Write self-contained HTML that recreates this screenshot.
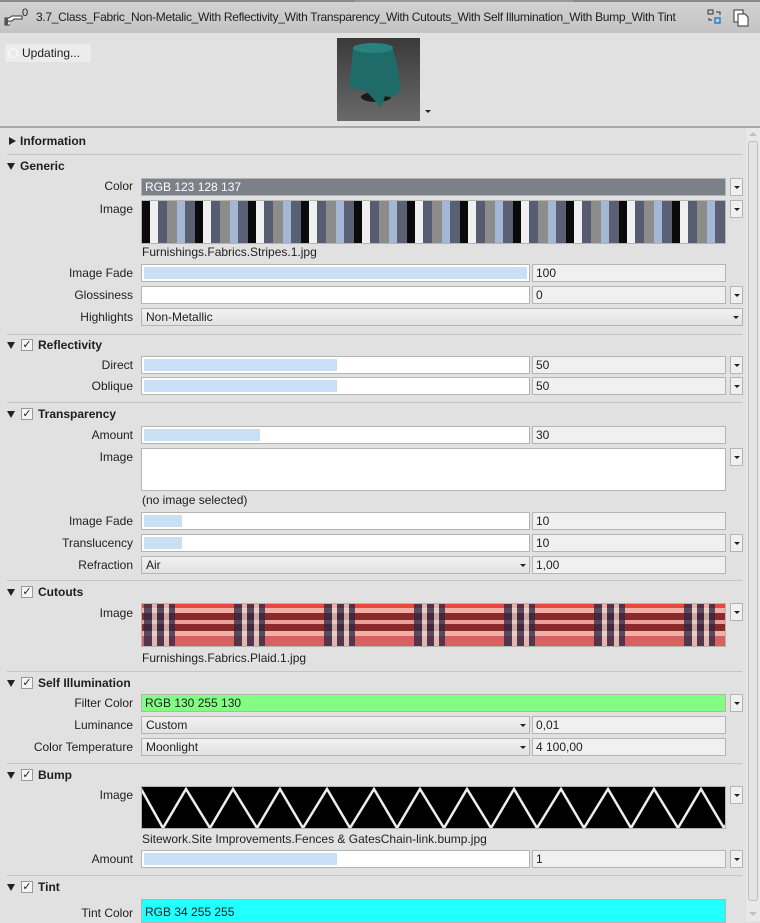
<!DOCTYPE html>
<html><head><meta charset="utf-8"><style>
*{box-sizing:border-box;margin:0;padding:0}
body{width:760px;height:921px;overflow:hidden;background:#e1e1e1;font-family:"Liberation Sans",sans-serif;font-size:12px;color:#1e1e1e;position:relative}
div,span{position:absolute}
.t{left:0;top:0;width:760px;height:33px;background:linear-gradient(#d2d2d2,#c3c3c3);border-top:2px solid #9a9a9a}
.l{right:627px;text-align:right;white-space:nowrap;line-height:14px}
.h{left:20px;font-weight:bold;line-height:14px}
.tri{width:0;height:0;border-left:4px solid transparent;border-right:4px solid transparent;border-top:7px solid #222}
.tr{width:0;height:0;border-top:4px solid transparent;border-bottom:4px solid transparent;border-left:7px solid #222}
.cb{width:12px;height:12px;border:1px solid #999;background:#f4f4f4;font-size:11px;line-height:10px;text-align:center}
.hr{left:7px;width:735px;height:1px;background:#c4c4c4}
.f{left:141px;width:585px;height:18px;border:1px solid #b4b4b4;line-height:16px;padding-left:3px}
.s{left:141px;width:389px;height:18px;border:1px solid #b4b4b4;background:#fff}
.s i{position:absolute;left:2px;top:2px;bottom:2px;background:#c8dff5}
.n{left:532px;width:194px;height:18px;border:1px solid #b4b4b4;background:#f0f0f0;line-height:16px;padding-left:3px}
.d{left:730px;width:13px;height:18px;border:1px solid #b4b4b4;background:#f0f0f0}
.d:after,.sel:after,.sel2:after{content:"";position:absolute;width:0;height:0;border-left:3px solid transparent;border-right:3px solid transparent;border-top:3px solid #222;top:7px;left:3px}
.sel,.sel2{left:141px;height:18px;border:1px solid #b4b4b4;background:linear-gradient(#f2f2f2,#e2e2e2);line-height:16px;padding-left:4px}
.sel{width:602px}.sel:after{left:591px}
.sel2{width:389px}.sel2:after{left:378px}
.fn{left:142px;line-height:14px}
</style></head><body>
<div class="t"></div>
<div style="left:0;top:0;width:355px;height:2px;background:#8a8a8a"></div>
<div style="left:573px;top:0;width:187px;height:2px;background:#8a8a8a"></div>
<svg style="position:absolute;left:3px;top:10px" width="24" height="18"><path d="M2 8h4l3-2h10v3h-8l-2 2H2z M2 8v7h5" fill="#fff" stroke="#333" stroke-width="1"/><rect x="2" y="8" width="3" height="7" fill="#555"/></svg>
<span style="left:22px;top:7px;font-size:11px">0</span>
<span style="left:36px;top:10px;font-size:12px;letter-spacing:-0.3px;white-space:nowrap">3.7_Class_Fabric_Non-Metalic_With Reflectivity_With Transparency_With Cutouts_With Self Illumination_With Bump_With Tint</span>
<svg style="position:absolute;left:707px;top:9px" width="18" height="16"><rect x="1" y="1" width="5" height="4" fill="none" stroke="#333"/><path d="M9 3h4v3M2 9v2h3" fill="none" stroke="#333"/><rect x="8" y="9" width="5" height="5" fill="none" stroke="#2a7fd0" stroke-width="1.5"/></svg>
<svg style="position:absolute;left:733px;top:9px" width="18" height="18"><rect x="1" y="1" width="9" height="12" fill="#fff" stroke="#333"/><path d="M5 5h7l3 3v9H5z" fill="#fff" stroke="#333"/></svg>
<div style="left:5px;top:44px;width:86px;height:18px;background:#ececec;border-radius:3px"></div>
<div style="left:8px;top:48px;width:10px;height:10px;border:1px solid #fff;border-radius:50%"></div>
<span style="left:22px;top:46px">Updating...</span>
<div style="left:337px;top:38px;width:83px;height:83px;background:linear-gradient(#3a3a3a,#6a6a6a)"></div>
<div style="left:361px;top:92px;width:30px;height:10px;background:#1a1a1a;border-radius:50%"></div>
<svg style="position:absolute;left:337px;top:38px" width="83" height="83"><path d="M16 10 Q34 2 55 8 L60 26 L64 50 Q58 62 48 58 L44 70 Q36 60 28 52 L12 50 Q14 30 16 10z" fill="#1f6b6a"/><ellipse cx="36" cy="10" rx="20" ry="5" fill="#2a8280"/></svg>
<div style="left:425px;top:110px;width:0;height:0;border-left:3px solid transparent;border-right:3px solid transparent;border-top:3px solid #222"></div>
<div style="left:0;top:126px;width:760px;height:2px;background:#a8a8a8"></div>
<div style="left:746px;top:128px;width:14px;height:793px;background:#e8e8e8"></div>
<div style="left:749px;top:132px;width:0;height:0;border-left:4px solid transparent;border-right:4px solid transparent;border-bottom:4px solid #c0c0c0"></div>
<div style="left:748px;top:141px;width:10px;height:760px;border:1px solid #bdbdbd;border-radius:3px;background:#e4e4e4"></div>
<div style="left:749px;top:912px;width:0;height:0;border-left:4px solid transparent;border-right:4px solid transparent;border-top:4px solid #c0c0c0"></div>

<div class="tr" style="left:9px;top:137px"></div><span class="h" style="top:134px">Information</span>
<div class="hr" style="top:154px"></div>
<div class="tri" style="left:7px;top:163px"></div><span class="h" style="top:159px">Generic</span>
<span class="l" style="top:179px">Color</span><div class="f" style="top:178px;background:#7b8089;color:#fff">RGB 123 128 137</div><div class="d" style="top:178px"></div>
<span class="l" style="top:202px">Image</span>
<div class="f" style="top:200px;height:44px;background:repeating-linear-gradient(90deg,#0a0a0a 0 8px,#f0f0f0 8px 16px,#575d70 16px 25px,#8c8c8a 25px 35px,#a4b8d6 35px 43px,#5a6074 43px 53px)"></div><div class="d" style="top:200px"></div>
<span class="fn" style="top:245px">Furnishings.Fabrics.Stripes.1.jpg</span>
<span class="l" style="top:266px">Image Fade</span><div class="s" style="top:264px"><i style="right:2px"></i></div><div class="n" style="top:264px">100</div>
<span class="l" style="top:288px">Glossiness</span><div class="s" style="top:286px"></div><div class="n" style="top:286px">0</div><div class="d" style="top:286px"></div>
<span class="l" style="top:310px">Highlights</span><div class="sel" style="top:308px">Non-Metallic</div>
<div class="hr" style="top:334px"></div>
<div class="tri" style="left:7px;top:342px"></div><div class="cb" style="left:21px;top:339px">✓</div><span class="h" style="left:38px;top:338px">Reflectivity</span>
<span class="l" style="top:358px">Direct</span><div class="s" style="top:356px"><i style="width:193px"></i></div><div class="n" style="top:356px">50</div><div class="d" style="top:356px"></div>
<span class="l" style="top:379px">Oblique</span><div class="s" style="top:377px"><i style="width:193px"></i></div><div class="n" style="top:377px">50</div><div class="d" style="top:377px"></div>
<div class="hr" style="top:402px"></div>
<div class="tri" style="left:7px;top:411px"></div><div class="cb" style="left:21px;top:408px">✓</div><span class="h" style="left:38px;top:407px">Transparency</span>
<span class="l" style="top:428px">Amount</span><div class="s" style="top:426px"><i style="width:116px"></i></div><div class="n" style="top:426px">30</div>
<span class="l" style="top:450px">Image</span><div class="f" style="top:448px;height:43px;background:#fff"></div><div class="d" style="top:448px"></div>
<span class="fn" style="top:493px">(no image selected)</span>
<span class="l" style="top:514px">Image Fade</span><div class="s" style="top:512px"><i style="width:38px"></i></div><div class="n" style="top:512px">10</div>
<span class="l" style="top:536px">Translucency</span><div class="s" style="top:534px"><i style="width:38px"></i></div><div class="n" style="top:534px">10</div><div class="d" style="top:534px"></div>
<span class="l" style="top:558px">Refraction</span><div class="sel2" style="top:556px">Air</div><div class="n" style="top:556px">1,00</div>
<div class="hr" style="top:580px"></div>
<div class="tri" style="left:7px;top:589px"></div><div class="cb" style="left:21px;top:586px">✓</div><span class="h" style="left:38px;top:585px">Cutouts</span>
<span class="l" style="top:606px">Image</span>
<div class="f" style="top:603px;height:44px;background:repeating-linear-gradient(90deg,transparent 0 2px,rgba(40,40,70,.75) 2px 10px,rgba(230,220,210,.7) 10px 15px,rgba(40,40,70,.75) 15px 22px,rgba(230,220,210,.7) 22px 27px,rgba(40,40,70,.75) 27px 33px,transparent 33px 90px),repeating-linear-gradient(180deg,#e8483e 0 4px,#f0b0a8 4px 9px,#8a2a2a 9px 16px,#e8a098 16px 20px,#8a2a2a 20px 27px,#f0b0a8 27px 32px,#d86060 32px 42px)"></div><div class="d" style="top:603px"></div>
<span class="fn" style="top:651px">Furnishings.Fabrics.Plaid.1.jpg</span>
<div class="hr" style="top:671px"></div>
<div class="tri" style="left:7px;top:680px"></div><div class="cb" style="left:21px;top:677px">✓</div><span class="h" style="left:38px;top:676px">Self Illumination</span>
<span class="l" style="top:696px">Filter Color</span><div class="f" style="top:694px;background:#82ff82">RGB 130 255 130</div><div class="d" style="top:694px"></div>
<span class="l" style="top:718px">Luminance</span><div class="sel2" style="top:716px">Custom</div><div class="n" style="top:716px">0,01</div>
<span class="l" style="top:740px">Color Temperature</span><div class="sel2" style="top:738px">Moonlight</div><div class="n" style="top:738px">4 100,00</div>
<div class="hr" style="top:763px"></div>
<div class="tri" style="left:7px;top:772px"></div><div class="cb" style="left:21px;top:769px">✓</div><span class="h" style="left:38px;top:768px">Bump</span>
<span class="l" style="top:788px">Image</span>
<div class="f" style="top:786px;height:43px;background:#000;padding:0;overflow:hidden"><svg width="585" height="43" style="position:absolute;left:0;top:0"><polyline fill="none" stroke="#eee" stroke-width="2.5" points="-2,0 21,41 44,2 68,41 91,2 115,41 138,2 161,41 185,2 208,41 232,2 255,41 278,2 302,41 325,2 349,41 372,2 395,41 419,2 442,41 466,2 489,41 512,2 536,41 559,2 582,41 605,2"/></svg></div><div class="d" style="top:786px"></div>
<span class="fn" style="top:832px">Sitework.Site Improvements.Fences &amp; GatesChain-link.bump.jpg</span>
<span class="l" style="top:852px">Amount</span><div class="s" style="top:850px"><i style="width:193px"></i></div><div class="n" style="top:850px">1</div><div class="d" style="top:850px"></div>
<div class="hr" style="top:875px"></div>
<div class="tri" style="left:7px;top:884px"></div><div class="cb" style="left:21px;top:881px">✓</div><span class="h" style="left:38px;top:880px">Tint</span>
<span class="l" style="top:906px">Tint Color</span><div class="f" style="top:899px;height:24px;background:#22ffff;padding-top:4px">RGB 34 255 255</div>
</body></html>
